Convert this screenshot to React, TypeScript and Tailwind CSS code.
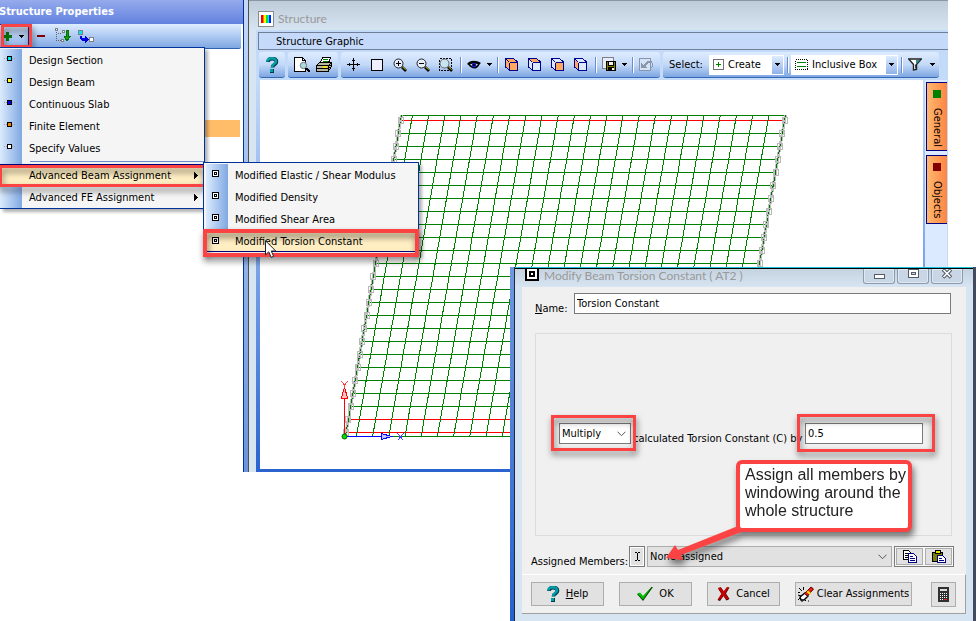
import type { ReactNode } from 'react';

const noop = () => {};

/* ---------- small drawings ---------- */

function Icon({ w = 16, h = 16, children }: { w?: number; h?: number; children: ReactNode }) {
  return (
    <svg width={w} height={h} viewBox={`0 0 ${w} ${h}`} shapeRendering="crispEdges" className="shrink-0" aria-hidden="true">
      {children}
    </svg>
  );
}

function Caret() {
  return (
    <Icon w={5} h={3}>
      <path d="M0 0h5v1h-1v1h-1v1h-1v-1h-1v-1h-1z" fill="#000" />
    </Icon>
  );
}

function HelpIcon() {
  return (
    <svg width="13" height="16" viewBox="0 0 13 16" className="shrink-0" aria-hidden="true">
      <path d="M2 5C2 2 4 1.600 6 1.600S10.500 2.300 10.500 5S6.500 7 6.500 10.500" fill="none" stroke="#003c50" strokeWidth="3.600" />
      <path d="M1.500 4.600C1.500 1.800 4 1.300 6 1.300S10 2.300 10 4.600S6 7 6 10.300" fill="none" stroke="#00a0a8" strokeWidth="2.400" />
      <rect x="4" y="12" width="4" height="4" fill="#003c50" />
      <rect x="4" y="12" width="3" height="3" fill="#00a0a8" />
    </svg>
  );
}

function PreviewIcon() {
  return (
    <Icon>
      <path d="M.5 .5h8l3 3v11h-11z" fill="#fff" stroke="#000" />
      <path d="M8.500 .5v3h3" fill="none" stroke="#000" />
      <circle cx="9.500" cy="8.500" r="3.200" fill="#a8dce0" stroke="#777" shapeRendering="auto" />
      <path d="M12 11l3.500 4" stroke="#000" strokeWidth="2" />
    </Icon>
  );
}

function PrintIcon() {
  return (
    <Icon w={17} h={15}>
      <path d="M4.500 5.500L6.500 .5h8L12.500 6z" fill="#fff" stroke="#000" />
      <path d="M7 2.500h5M6.500 4.500h5" stroke="#008000" />
      <path d="M.5 8.500l3-3h12v4l-3 4.500h-12z" fill="#b8b8a0" stroke="#000" />
      <path d="M1 8.500h11M12.500 8v5M12.500 8.500l3-3M1 11.500h11" fill="none" stroke="#000" />
      <path d="M7 9h4v2h-4z" fill="#ffe000" />
      <path d="M13 8h2M13 10h2" stroke="#000" />
    </Icon>
  );
}

function MoveIcon() {
  return (
    <Icon w={13} h={13}>
      <path d="M6 1h1v11h-1zM1 6h11v1h-11zM5 2h3v1h-3zM5 10h3v1h-3zM2 5h1v3h-1zM10 5h1v3h-1zM6 0h1v1h-1zM6 12h1v1h-1zM0 6h1v1h-1zM12 6h1v1h-1z" fill="#000" />
    </Icon>
  );
}

function ZoomIcon({ kind }: { kind: 'in' | 'out' | 'box' }) {
  return (
    <svg width="16" height="16" viewBox="0 0 16 16" className="shrink-0" aria-hidden="true">
      {kind === 'box' && (
        <rect x="1.500" y="1.500" width="12" height="12" fill="none" stroke="#000" strokeDasharray="2 1" shapeRendering="crispEdges" />
      )}
      <circle cx="6.500" cy="6.500" r="4.500" fill={kind === 'box' ? '#c8e4f0' : '#e6eefc'} stroke={kind === 'box' ? '#666' : '#222'} />
      {kind !== 'box' && <path d="M4 6.500h5" stroke="#000" />}
      {kind === 'in' && <path d="M6.500 4v5" stroke="#000" />}
      <path d="M10 10l4 4" stroke="#000" strokeWidth="2.600" />
      <path d="M10.500 9.800l3 3" stroke="#e0d000" strokeWidth="1" />
    </svg>
  );
}

function EyeIcon() {
  return (
    <svg width="14" height="10" viewBox="0 0 14 10" className="shrink-0" aria-hidden="true">
      <path d="M0 4C3 0 9 0 14 3C12 4 12 8 8 8.500C5 8.500 3 7 1.500 5z" fill="#000" />
      <path d="M3 4.500C5 3 9 3 11 4.500C9 7 6 7.500 3 4.500z" fill="#fff" />
      <circle cx="7" cy="5.200" r="2.400" fill="#1020c0" />
      <path d="M6 4h2v2h-2z" fill="#000" />
    </svg>
  );
}

function CubeIcon({ faces }: { faces: 'all' | 'top' | 'front' | 'left' }) {
  const orange = '#ffa860';
  const plain = '#dce8fc';
  return (
    <Icon w={13} h={13}>
      <path d="M1 1h8l3 3h-8z" fill={faces === 'all' || faces === 'top' ? orange : plain} />
      <path d="M1 1l3 3v8l-3-3z" fill={faces === 'all' || faces === 'left' ? orange : plain} />
      <path d="M4 4h8v8h-8z" fill={faces === 'all' || faces === 'front' ? orange : plain} />
      <path d="M.5 .5h8l4 3.500v8h-8l-4-3z M4.500 4.500v8M4.500 4.500h8M.5 .5l4 4" fill="none" stroke="#000090" />
    </Icon>
  );
}

function SaveViewIcon() {
  return (
    <Icon w={15} h={15}>
      <path d="M.5 .5h11v11h-11z" fill="#e4ecff" stroke="#808080" />
      <path d="M4 4h10v10h-10z" fill="#000" />
      <path d="M5 5h1v8h-1zM12 5h1v8h-1zM6 9h6v1h-6z" fill="#808000" />
      <path d="M7 5h4v3h-4z" fill="#f4f4f4" />
      <path d="M10 11h2v2h-2z" fill="#fff" />
    </Icon>
  );
}

function UndoViewIcon() {
  return (
    <Icon w={15} h={14}>
      <path d="M.5 .5h11v12h-11z" fill="#d4e2f8" stroke="#8a96aa" />
      <path d="M2 4v6h6l-2-2 3-3h2v-2h-3l-4 4z" fill="#8a96aa" />
      <path d="M10 3.500h2l1.500 2v3l-2 2" fill="none" stroke="#8a96aa" />
    </Icon>
  );
}

function PlusBoxIcon() {
  return (
    <Icon w={11} h={11}>
      <path d="M.5 .5h10v10h-10z" fill="#fff" stroke="#707070" />
      <path d="M5 3h1v5h-1zM3 5h5v1h-5z" fill="#008000" />
    </Icon>
  );
}

function BoxSelectIcon() {
  return (
    <Icon w={13} h={11}>
      <path d="M.5 .5h12v10h-12z" fill="none" stroke="#000" strokeDasharray="1 1" />
      <path d="M2 3h9v1h-9zM2 7h9v1h-9z" fill="#008000" />
    </Icon>
  );
}

function FunnelIcon() {
  return (
    <svg width="14" height="13" viewBox="0 0 14 13" className="shrink-0" aria-hidden="true">
      <path d="M.7 1h12.600L8.500 6.500v5L5.500 12V6.500z" fill="#fff" stroke="#222" strokeWidth="1.400" />
      <path d="M8 2h4L8 6z" fill="#2a8c8c" />
      <path d="M7 6.500h1v4h-1z" fill="#444" />
    </svg>
  );
}

function TreeAddIcon() {
  return (
    <Icon>
      <path d="M.5 .5h2v2h-2zM7.500 2.500h2v2h-2zM6.500 11.500h2v2h-2z" fill="#fff" stroke="#808080" />
      <path d="M1.500 4v10M3 5.500h4M3 12.500h4" fill="none" stroke="#606060" strokeDasharray="1 1" />
      <path d="M11 2h2v6h2v1l-3 3.500-3-3.500v-1h2z" fill="#10a010" stroke="#087008" />
    </Icon>
  );
}

function AssignIcon() {
  return (
    <Icon w={16} h={13}>
      <path d="M.5 .5h4v4h-4z" fill="#00e8f0" stroke="#808080" />
      <path d="M11.500 7.500h4v4h-4z" fill="#fff" stroke="#808080" />
      <path d="M2 6h2v2h3v-2l4 3.500-4 3.500v-2h-3l-2-2z" fill="#0000e0" />
    </Icon>
  );
}

function NodeMark({ fill }: { fill: string }) {
  return (
    <Icon w={11} h={5}>
      <path d="M0 2h1v1h-1zM2 2h1v1h-1zM8 2h1v1h-1zM10 2h1v1h-1z" fill="#a0a0a0" />
      <path d="M3.500 .5h4v4h-4z" fill={fill} stroke="#000" />
    </Icon>
  );
}

function SquareMark() {
  return (
    <Icon w={7} h={7}>
      <path d="M0 0h7v7h-7z" fill="#000" />
      <path d="M1 1h5v5h-5z" fill="#fff" />
      <path d="M2 2h3v3h-3z" fill="#000" />
      <path d="M3 3h1v1h-1z" fill="#fff" />
    </Icon>
  );
}

/* ---------- left panel ---------- */

const assignmentItems = [
  { label: 'Design Section', fill: '#00e8f0' },
  { label: 'Design Beam', fill: '#ffff00' },
  { label: 'Continuous Slab', fill: '#0000f0' },
  { label: 'Finite Element', fill: '#f08000' },
  { label: 'Specify Values', fill: '#ffffff' },
];

const beamItems = [
  'Modified Elastic / Shear Modulus',
  'Modified Density',
  'Modified Shear Area',
  'Modified Torsion Constant',
];

const gutter = 'flex w-[22px] shrink-0 self-stretch bg-linear-to-r from-[#dcebfd] to-[#80a8e2]';
const menuBox = 'border border-[#003399] bg-[#f5f5f5] shadow-[3px_3px_3px_rgba(0,0,0,0.3)]';
const redFrame = 'pointer-events-none absolute border-[#fc4343] drop-shadow-[1px_4px_3px_rgba(0,0,0,0.55)]';

function SubArrow() {
  return (
    <Icon w={4} h={7}>
      <path d="M0 0h1v1h1v1h1v1h1v1h-1v1h-1v1h-1v1h-1z" fill="#000" />
    </Icon>
  );
}

function BeamMenu() {
  return (
    <ul className={`absolute -top-0.5 left-[203px] z-20 w-[216px] pt-px pb-0.5 pl-0.5 ${menuBox}`}>
      {beamItems.map((label) => {
        const active = label === 'Modified Torsion Constant';
        return (
          <li key={label} className="relative">
            <button
              type="button"
              className={`flex h-[22px] w-full items-center text-left ${active ? 'border-y border-[#000080] bg-[#ffeec2]' : ''}`}
            >
              <span className={active ? 'flex w-[22px] shrink-0 self-stretch' : gutter}>
                <span className="mt-1.5 ml-1.5">
                  <SquareMark />
                </span>
              </span>
              <span className="pt-0.5 pl-[7px]">{label}</span>
            </button>
            {active && (
              <>
                <div className={`${redFrame} -top-px -right-px -left-[3px] h-7 border-4`} />
                <svg width="13" height="20" viewBox="0 0 13 20" className="absolute top-2.5 left-[59px]" aria-hidden="true">
                  <path d="M.5 .8v14l3.300-3 2.300 5.500 2.500-1-2.300-5.300h4.500z" fill="#fff" stroke="#222" />
                </svg>
              </>
            )}
          </li>
        );
      })}
    </ul>
  );
}

function AddMenu() {
  return (
    <ul className={`absolute top-[47px] left-0 z-20 w-[205px] border-l-0 pt-px ${menuBox}`}>
      {assignmentItems.map((item) => (
        <li key={item.label}>
          <button type="button" className="flex h-[22px] w-full items-center text-left">
            <span className={gutter}>
              <span className="mt-[7px] ml-1">
                <NodeMark fill={item.fill} />
              </span>
            </span>
            <span className="pt-0.5 pl-[7px]">{item.label}</span>
          </button>
        </li>
      ))}
      <li className="flex h-[5px]" role="separator">
        <span className={gutter} />
        <span className="mt-0.5 ml-2 h-px flex-1 bg-[#6a8ccb]" />
      </li>
      <li className="relative">
        <button
          type="button"
          className="flex h-[22px] w-full items-center border-y border-[#000080] bg-[#ffeec2] pr-1.5 pl-[29px] text-left"
        >
          <span className="flex-1 pt-0.5">Advanced Beam Assignment</span>
          <SubArrow />
        </button>
        <div className={`${redFrame} top-px -right-0.5 -left-px h-[22px] border-3`} />
        <BeamMenu />
      </li>
      <li>
        <button type="button" className="flex h-[22px] w-full items-center pr-1.5 text-left">
          <span className={gutter} />
          <span className="flex-1 pt-0.5 pl-[7px]">Advanced FE Assignment</span>
          <SubArrow />
        </button>
      </li>
    </ul>
  );
}

function PropertiesPanel() {
  return (
    <aside className="relative flex w-[249px] shrink-0">
      <div className="flex-1 border-r border-[#00309c]">
        <h2 className="-ml-px h-6 bg-linear-to-b from-[#95abec] to-[#6381df] text-[11px] leading-6 font-bold text-white">
          Structure Properties
        </h2>
        <div className="mr-0.5 flex h-[25px] items-center rounded-br-xs border-b border-[#2e62b4] bg-linear-to-b from-[#dfedff] to-[#7fa7e3]">
          <button
            type="button"
            aria-label="Add"
            className="relative flex h-full w-[29px] items-center justify-between border-t border-r border-[#003399] bg-linear-to-b from-[#cfe0f8] to-[#8fb3e8] pr-1 pl-[3px]"
          >
            <Icon w={9} h={9}>
              <path d="M3 0h3v3h3v3h-3v3h-3v-3h-3v-3h3z" fill="#0a7a0a" />
            </Icon>
            <Caret />
            <span className={`${redFrame} -top-px left-px h-6 w-[31px] border-3`} />
          </button>
          <button type="button" aria-label="Remove" className="flex w-[23px] justify-center">
            <span className="h-0.5 w-2 bg-[#800000]" />
          </button>
          <button type="button" aria-label="Insert" className="flex w-[22px] justify-center">
            <TreeAddIcon />
          </button>
          <button type="button" aria-label="Assign" className="flex w-6 justify-center">
            <AssignIcon />
          </button>
        </div>
        <div className="mt-[71px] mr-[3px] h-[17px] bg-[#ffbc69]" />
      </div>
      <div className="w-[5px] border-r border-[#505050] bg-linear-to-b from-[#c5daf8] to-[#6a94dc]" />
      <AddMenu />
    </aside>
  );
}

/* ---------- structure window ---------- */

const COLUMNS = 24;
const SKEW = 56 / 321;

// left edge of the deck at a given height
const edgeX = (y: number) => 141.5 - (y - 35) * SKEW;

const rows = [35, 40, ...Array.from({ length: 24 }, (_, i) => 53 + i * 13), 356];
const redRows = [40, 339, 352];

function DeckPlan() {
  return (
    <svg className="block h-[389px] w-full bg-white" aria-label="Structure plan">
      <g shapeRendering="crispEdges" fill="none">
        {rows.map((y) => (
          <path
            key={y}
            d={`M${edgeX(y)} ${y + 0.5}H${edgeX(y) + 384}`}
            stroke={redRows.includes(y) ? '#ff0000' : '#008000'}
          />
        ))}
        <path d="M141.500 35L85.500 356M525.500 35L469.500 356" stroke="#c0c0c0" strokeWidth="3" />
        <path d="M141.500 35L85.500 356M525.500 35L469.500 356" stroke="#007000" strokeDasharray="5 2" />
        {Array.from({ length: COLUMNS - 1 }, (_, i) => 152.5 + i * 16.2).map((x) => (
          <path key={x} d={`M${x} 35L${x - 56} 356`} stroke="#008000" />
        ))}
        {rows.slice(1, -1).map((y) => (
          <path
            key={y}
            d={`M${Math.round(edgeX(y)) - 2.5} ${y - 2.5}h5v6h-5zM${Math.round(edgeX(y)) + 381.5} ${y - 2.5}h5v6h-5z`}
            stroke="#b8b8b8"
          />
        ))}
        <path d="M84.500 356V318" stroke="#ff0000" />
        <path d="M84.500 307l-3 11h6z" fill="#ffc0c0" stroke="#ff0000" />
        <path d="M81 301l3.500 4 3.500-4M84.500 305v3" stroke="#ff4040" />
        <path d="M85 356.500h37" stroke="#0000ff" />
        <path d="M121.500 353.500v6l10-3z" fill="#c0c0ff" stroke="#0000ff" />
        <path d="M137.500 353.500l6 7M143.500 353.500l-6 7" stroke="#4040ff" />
      </g>
      <circle cx="84.500" cy="356.500" r="2.500" fill="#00e000" stroke="#006000" />
    </svg>
  );
}

const toolGroup = 'flex h-[26px] items-center rounded-[3px] border-b border-[#3467b4] bg-linear-to-b from-[#dfecff] via-[#c3d9f8] to-[#7ea6e2]';
const toolButton = 'flex h-full w-[23px] shrink-0 items-center justify-center';

function Divider({ className }: { className: string }) {
  return (
    <span className={`flex h-4 shrink-0 justify-center ${className}`}>
      <span className="w-0.5 border-r border-l border-r-white border-l-[#6a8ccb]" />
    </span>
  );
}

function ToolSelect({ icon, label, value, className }: { icon: ReactNode; label: string; value: string; className: string }) {
  return (
    <div className={`flex h-5 items-center border border-white bg-white pl-[3px] ${className}`}>
      {icon}
      <select aria-label={label} className="min-w-0 flex-1 appearance-none bg-white pl-1 outline-none">
        <option>{value}</option>
      </select>
      <span className="flex h-full w-[11px] items-center justify-center bg-linear-to-b from-[#dfecff] to-[#8fb2e8]">
        <Caret />
      </span>
    </div>
  );
}

function GraphicToolbar() {
  return (
    <div className="flex h-[30px] items-start gap-[3px] bg-[#c4daf9] pt-0.5 pl-[3px]">
      <div className={toolGroup}>
        <button type="button" aria-label="Help" className="flex h-full w-[26px] items-center justify-center">
          <HelpIcon />
        </button>
      </div>
      <div className={`${toolGroup} px-0.5`}>
        <button type="button" aria-label="Print preview" className={toolButton}>
          <PreviewIcon />
        </button>
        <button type="button" aria-label="Print" className={toolButton}>
          <PrintIcon />
        </button>
      </div>
      <div className={`${toolGroup} pr-0.5 pl-px`}>
        <button type="button" aria-label="Pan" className={toolButton}>
          <MoveIcon />
        </button>
        <button type="button" aria-label="Fit" className={toolButton}>
          <span className="size-3 border border-black bg-[#eef0ff]" />
        </button>
        <button type="button" aria-label="Zoom in" className={toolButton}>
          <ZoomIcon kind="in" />
        </button>
        <button type="button" aria-label="Zoom out" className={toolButton}>
          <ZoomIcon kind="out" />
        </button>
        <button type="button" aria-label="Zoom window" className={toolButton}>
          <ZoomIcon kind="box" />
        </button>
        <Divider className="w-2" />
        <button type="button" aria-label="View" className="flex h-full w-[31px] items-center justify-between pr-1 pl-0.5">
          <EyeIcon />
          <Caret />
        </button>
        <Divider className="w-1" />
        {(['all', 'top', 'front', 'left'] as const).map((faces) => (
          <button key={faces} type="button" aria-label={`View ${faces}`} className={toolButton}>
            <CubeIcon faces={faces} />
          </button>
        ))}
        <Divider className="w-2" />
        <button type="button" aria-label="Save view" className="flex h-full w-[31px] items-center justify-between pr-1 pl-0.5">
          <SaveViewIcon />
          <Caret />
        </button>
        <Divider className="w-1" />
        <button type="button" aria-label="Undo view" className={toolButton}>
          <UndoViewIcon />
        </button>
      </div>
      <div className={`${toolGroup} pr-1 pl-1.5`}>
        <span className="w-10">Select:</span>
        <ToolSelect icon={<PlusBoxIcon />} label="Select mode" value="Create" className="w-[75px]" />
        <Divider className="w-[7px]" />
        <ToolSelect icon={<BoxSelectIcon />} label="Select shape" value="Inclusive Box" className="w-[107px]" />
        <Divider className="w-2" />
        <button type="button" aria-label="Filter" className="flex h-full w-[29px] items-center justify-between pl-0.5">
          <FunnelIcon />
          <Caret />
        </button>
      </div>
    </div>
  );
}

function SideTab({ label, dot }: { label: string; dot: string }) {
  return (
    <button
      type="button"
      className="flex h-[69px] w-[21px] flex-col items-center gap-2.5 border border-r-0 border-[#000080] bg-linear-to-r from-[#ffb870] to-[#ff8540] pt-[7px]"
    >
      <span className={`size-2 ${dot}`} />
      <span className="leading-4 [writing-mode:vertical-rl]">{label}</span>
    </button>
  );
}

function StructureWindow() {
  return (
    <section className="mr-7 flex min-w-0 flex-1 flex-col bg-[#d7e4f1]">
      <header className="flex h-[30px] items-center border-t border-[#8a97a5] bg-linear-to-b from-[#becbd9] to-[#d7e4f1] pt-1.5 pl-[9px]">
        <svg width="16" height="16" viewBox="0 0 16 16" shapeRendering="crispEdges" aria-hidden="true">
          <path d="M.5 .5h15v15h-15z" fill="#fff" stroke="#8a8a8a" />
          <path d="M3 4h2v8h-2z" fill="#f00000" />
          <path d="M5 4h1v8h-1z" fill="#ff8000" />
          <path d="M6 4h2v8h-2z" fill="#ffff00" />
          <path d="M8 4h2v8h-2z" fill="#00e040" />
          <path d="M10 4h1v8h-1z" fill="#00e0ff" />
          <path d="M11 4h2v8h-2z" fill="#0020f0" />
        </svg>
        <h1 className="pl-1 font-['Lato',sans-serif] text-xs text-[#999999]">Structure</h1>
      </header>
      <div className="ml-[7px] flex flex-1 flex-col bg-[#c4daf9] pt-0.5">
        <div className="ml-0.5 h-[18px] border border-r-0 border-[#6f7f98] bg-[#c5dafa] pt-px pl-[17px] leading-4">Structure Graphic</div>
        <GraphicToolbar />
        <div className="flex">
          <div className="flex-1 border-b-3 border-[#2b64cf] bg-linear-to-b from-[#c4daf9] to-[#2b64cf] pr-0.5 pl-1">
            <DeckPlan />
          </div>
          <div className="flex w-[23px] flex-col items-end gap-1 border-r border-[#c4daf9] bg-[#dceaff] pt-0.5">
            <SideTab label="General" dot="bg-[#008000]" />
            <SideTab label="Objects" dot="bg-[#800000]" />
          </div>
        </div>
      </div>
    </section>
  );
}

/* ---------- dialog ---------- */

function WindowButton({ label, children }: { label: string; children: ReactNode }) {
  return (
    <button
      type="button"
      aria-label={label}
      className="flex h-[15px] w-8 items-start justify-center rounded-b-[3px] border border-t-0 border-[#8d9bb0] bg-[#c9d6e5] inset-shadow-[0_0_0_1px_#dfe8f2]"
    >
      {children}
    </button>
  );
}

const dialogButton = 'flex h-6 items-center justify-center gap-1.5 border border-[#adadad] bg-[#e1e1e1]';

function Chevron() {
  return (
    <svg width="9" height="6" viewBox="0 0 9 6" className="shrink-0" aria-hidden="true">
      <path d="M.5 .7L4.500 4.700L8.500 .7" fill="none" stroke="#555" />
    </svg>
  );
}

function TitleBar() {
  return (
    <header className="flex h-[18px] justify-between bg-linear-to-b from-[#c5d2e0] to-[#d7e4f1] px-2.5">
      <div className="flex">
        <svg width="14" height="12" viewBox="0 2 14 12" shapeRendering="crispEdges" aria-hidden="true">
          <path d="M0 0h14v14h-14z" fill="#000" />
          <path d="M2 2h10v10h-10z" fill="#fff" />
          <path d="M4 4h6v6h-6z" fill="#000" />
          <path d="M6 6h2v2h-2z" fill="#fff" />
        </svg>
        <h2 className="pl-[5px] font-['Lato',sans-serif] text-xs leading-[14px] text-[#999999]">Modify Beam Torsion Constant ( AT2 )</h2>
      </div>
      <div className="flex gap-0.5">
        <WindowButton label="Minimize">
          <Icon w={11} h={10}>
            <path d="M.5 5.500h10v4h-10z" fill="#fff" stroke="#555b66" />
          </Icon>
        </WindowButton>
        <WindowButton label="Maximize">
          <Icon w={11} h={9}>
            <path d="M.5 .5h10v8h-10z" fill="#fff" stroke="#555b66" />
            <path d="M3.500 3.500h4v2h-4z" fill="#c9d6e5" stroke="#555b66" />
          </Icon>
        </WindowButton>
        <WindowButton label="Close">
          <svg width="12" height="10" viewBox="0 0 12 10" aria-hidden="true">
            <path d="M2 .5L10 8.500M10 .5L2 8.500" stroke="#555b66" strokeWidth="3.600" />
            <path d="M2.500 1L9.500 8M9.500 1L2.500 8" stroke="#fff" strokeWidth="1.600" />
          </svg>
        </WindowButton>
      </div>
    </header>
  );
}

function Callout() {
  return (
    <div className="absolute -top-[86px] left-[107px] z-10 drop-shadow-[2px_5px_3px_rgba(0,0,0,0.5)]">
      <div className="h-[72px] w-[176px] rounded-md border-4 border-[#fc4343] bg-white pt-0.5 pl-[5px] font-['Liberation_Sans',sans-serif] text-base leading-[18px] text-[#222]">
        Assign all members by windowing around the whole structure
      </div>
      <svg width="90" height="40" viewBox="0 0 90 40" className="absolute top-16 -left-[70px]" aria-hidden="true">
        <path d="M72 2L78 7L15 31L17 36L0 34L9 21L12 26z" fill="#fc4343" />
      </svg>
    </div>
  );
}

function TorsionDialog() {
  return (
    <section className="absolute top-[267px] right-0 left-[510px] z-30 flex bg-[#d7e4f1]">
      <div className="w-[5px] shrink-0 border-r border-[#202840] bg-linear-to-b from-[#6f98e0] to-[#2560cc]" />
      <div className="min-w-0 flex-1 border-t border-[#18c0dc]">
        <div className="h-px bg-black" />
        <TitleBar />
        <div className="mx-[7px] bg-[#f0f0f0] pt-1.5">
          <div className="flex h-[21px] items-start pr-[15px] pl-[13px]">
            <label htmlFor="name" className="w-[39px] pt-2 leading-4">
              <span className="underline">N</span>ame:
            </label>
            <input
              id="name"
              value="Torsion Constant"
              onChange={noop}
              className="h-[21px] min-w-0 flex-1 border border-[#7a7a7a] bg-white px-0.5 outline-none"
            />
          </div>

          <div className="mt-[19px] mr-3.5 ml-[13px] flex h-[203px] items-start border border-[#dcdcdc] pt-[89px] pl-[23px]">
            <div className="relative flex h-[21px] w-[72px] items-center border border-[#7a7a7a] bg-white pr-1">
              <select aria-label="Operation" className="min-w-0 flex-1 appearance-none bg-white pl-0.5 outline-none">
                <option>Multiply</option>
              </select>
              <Chevron />
              <div className={`${redFrame} -top-[9px] -right-1.5 -left-[9px] h-9 border-3`} />
            </div>
            <label htmlFor="factor" className="mt-2 ml-0.5 w-[172px] leading-4 whitespace-nowrap">
              calculated Torsion Constant (C) by
            </label>
            <div className="relative">
              <input
                id="factor"
                value="0.5"
                onChange={noop}
                className="block h-[21px] w-[118px] border border-[#7a7a7a] bg-white px-0.5 outline-none"
              />
              <div className={`${redFrame} -top-[9px] -right-3 -left-2 h-[38px] border-3`} />
            </div>
          </div>

          <div className="flex h-[31px] items-start pt-2.5 pr-3 pl-[9px]">
            <label htmlFor="members" className="w-[98px] pt-2 leading-4 whitespace-nowrap">
              Assigned Members:
            </label>
            <div className="relative flex min-w-0 flex-1">
              <button type="button" aria-label="Pick" className="flex h-[21px] w-4 items-center justify-center border border-[#7a7a7a] bg-[#e1e1e1] inset-shadow-[0_0_0_1px_#fff]">
                <Icon w={5} h={9}>
                  <path d="M0 0h2v1h-2zM3 0h2v1h-2zM2 1h1v7h-1zM0 8h2v1h-2zM3 8h2v1h-2z" fill="#000" />
                </Icon>
              </button>
              <div className="ml-0.5 flex h-[21px] min-w-0 flex-1 items-center border border-[#adadad] bg-[#e1e1e1] pr-1">
                <select id="members" className="min-w-0 flex-1 appearance-none pl-0.5 outline-none">
                  <option>None assigned</option>
                </select>
                <Chevron />
              </div>
              <Callout />
            </div>
            <div className="ml-0.5 flex h-[21px] gap-0.5 border border-[#7a7a7a] bg-[#f8f8f8] p-px">
              <button type="button" aria-label="Copy" className="flex w-[27px] items-center justify-center border border-[#adadad] bg-[#e1e1e1]">
                <Icon w={14} h={13}>
                  <path d="M.5 .5h5l2 2v7h-7z" fill="#fff" stroke="#000" />
                  <path d="M2 3.500h3M2 5.500h3M2 7.500h3" stroke="#000" />
                  <path d="M5.500 3.500h5l2.500 2.500v6h-7.500z" fill="#fff" stroke="#000080" />
                  <path d="M7 6.500h3M7 8.500h5M7 10.500h5" stroke="#000080" />
                </Icon>
              </button>
              <button type="button" aria-label="Paste" className="flex w-[27px] items-center justify-center border border-[#adadad] bg-[#e1e1e1]">
                <Icon w={14} h={13}>
                  <path d="M.5 2.500h10v9h-10z" fill="#808000" stroke="#000" />
                  <path d="M3 .5h5v3h-5z" fill="#e8e000" stroke="#000" />
                  <path d="M5.500 5.500h5l2.500 2.500v4h-7.500z" fill="#fff" stroke="#000080" />
                  <path d="M7 8.500h3M7 10.500h5" stroke="#000080" />
                </Icon>
              </button>
            </div>
          </div>

          <footer className="mt-[7px] flex h-10 items-center gap-[15px] border-t border-r border-b border-t-white border-r-[#a0a0a0] border-b-[#a0a0a0] px-[9px]">
            <button type="button" className={`w-[73px] ${dialogButton}`}>
              <HelpIcon />
              <span>
                <span className="underline">H</span>elp
              </span>
            </button>
            <button type="button" className={`w-[73px] ${dialogButton}`}>
              <svg width="16" height="14" viewBox="0 0 16 14" aria-hidden="true">
                <path d="M0 7l3-1 3 3.500L14.500 0H16L6 14z" fill="#004000" />
                <path d="M.5 6.500l2.500-1 3 3.500L14.500 0 6 12.500z" fill="#00c000" />
              </svg>
              <span>OK</span>
            </button>
            <button type="button" className={`w-[73px] ${dialogButton}`}>
              <svg width="13" height="14" viewBox="0 0 13 14" aria-hidden="true">
                <path d="M1 1.500l3-1 3 4 3-4 2.500 0-3.500 6 3.500 5.500-3 1.500-3-4.500-3.500 5-2.500-1 4-6z" fill="#400000" />
                <path d="M1 1l2.500-1L6.500 4.500 10 0l2 .5L8 6.500l3.500 5-2.500 1L6 8.500l-3 4.500-2-1 3.500-5.500z" fill="#c80000" />
              </svg>
              <span>Cancel</span>
            </button>
            <button type="button" className="flex h-6 w-[117px] items-center justify-center gap-[3px] border border-[#adadad] bg-[#e1e1e1] whitespace-nowrap">
              <svg width="16" height="16" viewBox="0 0 16 16" className="shrink-0" aria-hidden="true">
                <path d="M1 2l3 3M0 6.500h2M5.500 1v3M0 9l3 1M0 14l2-2M3 15h2M7 14.500h1M10 15h1" stroke="#000" />
                <path d="M2 11l5-4 3 3-4 4H3z" fill="#fff" stroke="#000" strokeWidth="1.400" />
                <path d="M6.500 7.500L13 1l2.500 2L9.500 10z" fill="#e02010" stroke="#600" />
                <path d="M8.500 6l3 2.500 1.500-1.500-3-2.500z" fill="#ffe000" />
              </svg>
              Clear Assignments
            </button>
            <button type="button" aria-label="Calculator" className="ml-auto flex size-[25px] items-center justify-center border border-[#adadad] bg-[#e1e1e1]">
              <Icon w={11} h={15}>
                <path d="M0 0h11v15h-11z" fill="#303030" />
                <path d="M2 2h7v2h-7z" fill="#d8e0d8" />
                <path d="M2 6h1v1h-1zM4 6h1v1h-1zM6 6h1v1h-1zM8 6h1v1h-1zM2 8h1v1h-1zM4 8h1v1h-1zM6 8h1v1h-1zM8 8h1v1h-1zM2 10h1v1h-1zM4 10h1v1h-1zM6 10h1v1h-1zM8 10h1v1h-1zM2 12h1v1h-1zM4 12h1v1h-1z" fill="#fff" />
                <path d="M6 12h3v1h-3z" fill="#f02020" />
              </Icon>
            </button>
          </footer>
        </div>
        <div className="h-[7px]" />
      </div>
      <div className="w-[3px] shrink-0 bg-[#434a5e]" />
    </section>
  );
}

export default function App() {
  return (
    <main className="relative min-h-screen overflow-hidden bg-white font-['DejaVu_Sans_Condensed','Noto_Sans',sans-serif] text-[11px] leading-4 text-black">
      <div className="flex">
        <PropertiesPanel />
        <StructureWindow />
      </div>
      <TorsionDialog />
    </main>
  );
}
